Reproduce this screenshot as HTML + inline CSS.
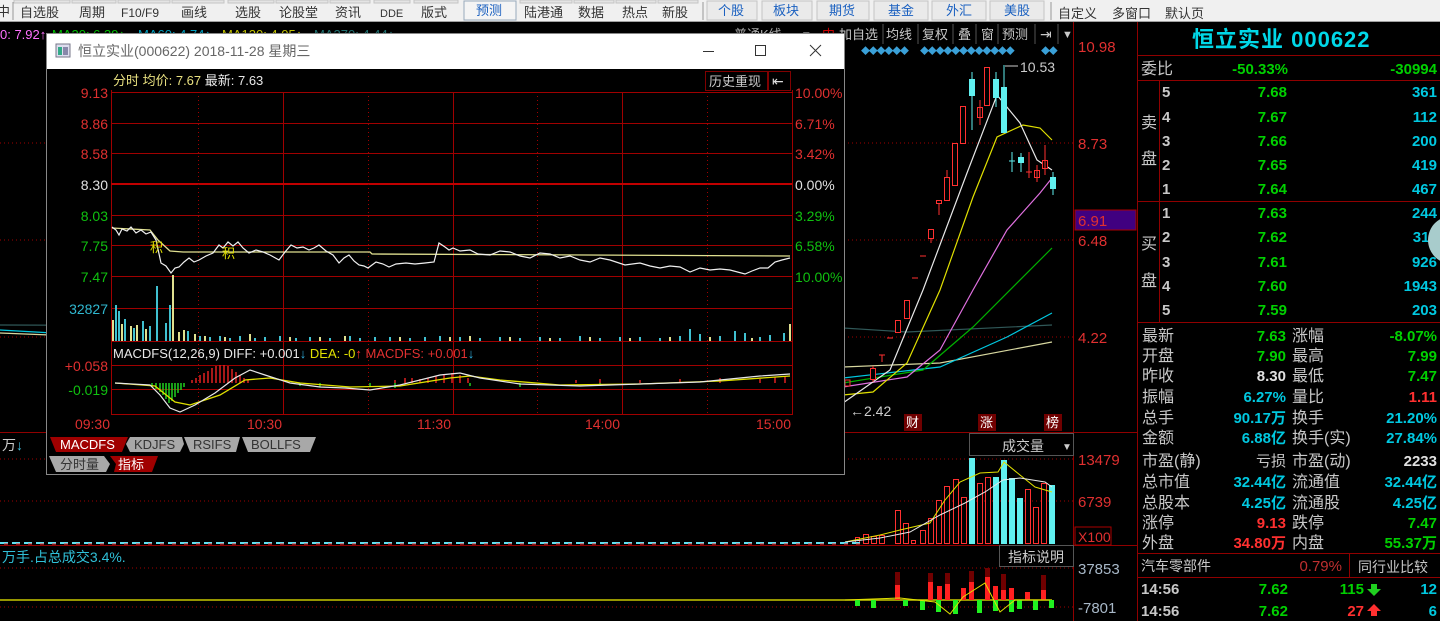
<!DOCTYPE html>
<html><head><meta charset="utf-8"><style>
html,body{margin:0;padding:0;background:#000;width:1440px;height:621px;overflow:hidden}
svg{display:block;font-family:"Liberation Sans","Noto Sans CJK SC",sans-serif}
</style></head><body>
<svg width="1440" height="621" viewBox="0 0 1440 621" xmlns="http://www.w3.org/2000/svg">
<rect width="1440" height="621" fill="#000"/>
<!-- toolbar -->
<rect x="0" y="0" width="1440" height="22" fill="#f0f0f0"/>
<line x1="0" y1="21.5" x2="1440" y2="21.5" stroke="#a0a0a0"/>
<g fill="#e4e4e4" stroke="#c4c4c4">
<rect x="14" y="0" width="56" height="3"/><rect x="72" y="0" width="44" height="3"/><rect x="118" y="0" width="52" height="3"/><rect x="172" y="0" width="52" height="3"/><rect x="228" y="0" width="46" height="3"/><rect x="276" y="0" width="52" height="3"/><rect x="330" y="0" width="40" height="3"/><rect x="374" y="0" width="36" height="3"/><rect x="414" y="0" width="44" height="3"/>
<rect x="464" y="1" width="52" height="19" fill="#f4f4f4" stroke="#9ab"/>
<rect x="520" y="0" width="52" height="3"/><rect x="574" y="0" width="40" height="3"/><rect x="616" y="0" width="40" height="3"/><rect x="658" y="0" width="40" height="3"/>
<rect x="707" y="1" width="50" height="19" fill="#eaeaea"/><rect x="762" y="1" width="50" height="19" fill="#eaeaea"/><rect x="817" y="1" width="52" height="19" fill="#eaeaea"/><rect x="874" y="1" width="54" height="19" fill="#eaeaea"/><rect x="932" y="1" width="54" height="19" fill="#eaeaea"/><rect x="990" y="1" width="54" height="19" fill="#eaeaea"/>
</g>
<line x1="1051" y1="2" x2="1051" y2="20" stroke="#999"/><line x1="13" y1="2" x2="13" y2="20" stroke="#999"/><line x1="703" y1="2" x2="703" y2="20" stroke="#999"/>
<g font-size="13" fill="#333">
<text x="-3" y="16">中</text><text x="20" y="17">自选股</text><text x="79" y="17">周期</text><text x="121" y="17" font-size="12">F10/F9</text><text x="181" y="17">画线</text><text x="235" y="17">选股</text><text x="279" y="17">论股堂</text><text x="335" y="17">资讯</text><text x="380" y="17" font-size="11">DDE</text><text x="421" y="17">版式</text>
<text x="476" y="15" fill="#1a60c0">预测</text><text x="524" y="17">陆港通</text><text x="578" y="17">数据</text><text x="622" y="17">热点</text><text x="662" y="17">新股</text>
<g fill="#1a60c0"><text x="718" y="15">个股</text><text x="773" y="15">板块</text><text x="829" y="15">期货</text><text x="888" y="15">基金</text><text x="946" y="15">外汇</text><text x="1004" y="15">美股</text></g>
<text x="1058" y="18">自定义</text><text x="1112" y="18">多窗口</text><text x="1165" y="18">默认页</text>
</g>
<!-- main header row -->
<g font-size="13">
<text x="0" y="39" fill="#ff70ff">0: 7.92↑</text><text x="52" y="39" fill="#00c000">MA20: 6.39↑</text><text x="138" y="39" fill="#00a0c0">MA60: 4.74↑</text><text x="222" y="39" fill="#c0c000">MA120: 4.05↑</text><text x="314" y="39" fill="#207070">MA270: 4.44↑</text>
<text x="734" y="39" fill="#aaa">普通K线</text><text x="803" y="39" fill="#aaa">▾</text><text x="822" y="39" fill="#c00">中</text>
<g fill="#c8c8c8"><text x="839" y="39">加自选</text><text x="886" y="39">均线</text><text x="922" y="39">复权</text><text x="958" y="39">叠</text><text x="981" y="39">窗</text><text x="1002" y="39">预测</text><text x="1040" y="39" font-size="14">⇥</text><text x="1062" y="38" font-size="11">▼</text></g>
</g>
<g stroke="#555"><line x1="883" y1="24" x2="883" y2="44"/><line x1="918" y1="24" x2="918" y2="44"/><line x1="953" y1="24" x2="953" y2="44"/><line x1="976" y1="24" x2="976" y2="44"/><line x1="998" y1="24" x2="998" y2="44"/><line x1="1035" y1="24" x2="1035" y2="44"/><line x1="1058" y1="24" x2="1058" y2="44"/></g>
<g fill="#3aa0d8" font-size="9"><text x="861" y="54" letter-spacing="-1.2">◆◆◆◆◆◆</text><text x="920" y="54" letter-spacing="-1.2">◆◆◆◆◆◆◆◆◆◆◆◆</text><text x="1041" y="54" letter-spacing="-1.2">◆◆</text></g>
<!-- main chart grid -->
<g stroke="#a00000" stroke-dasharray="1,3"><line x1="0" y1="143" x2="1073" y2="143"/><line x1="0" y1="240" x2="1073" y2="240"/><line x1="0" y1="337" x2="1073" y2="337"/><line x1="0" y1="459" x2="1073" y2="459"/><line x1="0" y1="501" x2="1073" y2="501"/><line x1="0" y1="568" x2="1073" y2="568"/><line x1="0" y1="607" x2="1073" y2="607"/></g>
<g stroke="#900000"><line x1="0" y1="432.5" x2="1137" y2="432.5"/><line x1="0" y1="545.5" x2="1137" y2="545.5"/><line x1="1073.5" y1="22" x2="1073.5" y2="621"/><line x1="1137.5" y1="22" x2="1137.5" y2="621"/><line x1="1137" y1="55.5" x2="1440" y2="55.5"/></g>
<!-- MA lines -->
<g fill="none" stroke-width="1.2">
<polyline stroke="#305858" points="0,325 843,328 907,332 1052,325"/>
<polyline stroke="#d8d8a0" points="0,333 843,367 940,363 1052,342"/>
<polyline stroke="#00c8e0" points="0,330 843,378 940,367 1007,337 1052,313"/>
<polyline stroke="#00b000" points="843,383 923,370 973,327 1052,248"/>
<polyline stroke="#e070e0" points="843,387 907,377 940,350 973,290 1007,230 1040,193 1052,178"/>
<polyline stroke="#e0e000" points="843,395 873,392 907,363 940,290 973,197 997,137 1023,125 1040,128 1052,140"/>
<polyline stroke="#e8e8e8" points="843,403 890,370 923,290 967,173 997,95 1020,123 1037,160 1052,170"/>
</g>
<!-- candles -->
<g stroke="#ff3030" fill="none">
<line x1="873" y1="366" x2="873" y2="382"/><rect x="870.5" y="368.5" width="5" height="11" fill="#000"/>
<line x1="879" y1="355" x2="885" y2="355"/><line x1="882" y1="355" x2="882" y2="362"/>
<line x1="887" y1="338" x2="893" y2="338"/>
<rect x="895.5" y="320.5" width="5" height="12" fill="#000"/>
<rect x="904.5" y="300.5" width="5" height="18" fill="#000"/>
<line x1="912" y1="278" x2="918" y2="278"/><line x1="920" y1="256" x2="926" y2="256"/>
<rect x="928.5" y="229.5" width="5" height="9" fill="#000"/><line x1="931" y1="238" x2="931" y2="243"/>
<rect x="936.5" y="200.5" width="5" height="3" fill="#000"/><line x1="939" y1="203" x2="939" y2="215"/>
<rect x="944.5" y="177.5" width="5" height="23" fill="#000"/><line x1="947" y1="170" x2="947" y2="177"/>
<rect x="952.5" y="143.5" width="5" height="42" fill="#000"/>
<rect x="960.5" y="106.5" width="5" height="37" fill="#000"/>
<rect x="977.5" y="107.5" width="5" height="10" fill="#000"/><line x1="980" y1="100" x2="980" y2="125"/>
<rect x="984.5" y="67.5" width="5" height="38" fill="#000"/>
<line x1="1029" y1="152" x2="1029" y2="178"/><line x1="1026" y1="172" x2="1032" y2="172"/>
<rect x="1034.5" y="170.5" width="5" height="7" fill="#000"/><line x1="1037" y1="165" x2="1037" y2="182"/>
<rect x="1042.5" y="160.5" width="5" height="8" fill="#000"/><line x1="1045" y1="145" x2="1045" y2="175"/>
</g>
<g fill="#60f0f0" stroke="#60f0f0">
<line x1="972" y1="72" x2="972" y2="130"/><rect x="969.5" y="79.5" width="5" height="16"/>
<line x1="996" y1="72" x2="996" y2="107"/><rect x="993.5" y="79.5" width="5" height="18"/>
<line x1="1004" y1="65" x2="1004" y2="132"/><rect x="1001.5" y="87.5" width="5" height="45"/>
<line x1="1012" y1="152" x2="1012" y2="172"/><line x1="1009" y1="161" x2="1015" y2="161"/>
<line x1="1021" y1="153" x2="1021" y2="172"/><rect x="1018.5" y="157.5" width="5" height="5"/>
<line x1="1053" y1="172" x2="1053" y2="195"/><rect x="1050.5" y="177.5" width="5" height="11"/>
</g>
<line x1="1005" y1="66" x2="1018" y2="66" stroke="#ccc"/><text x="1020" y="72" font-size="14" fill="#ccc">10.53</text>
<text x="850" y="416" font-size="14" fill="#ccc">←2.42</text>
<rect x="845" y="380" width="5" height="6" fill="none" stroke="#f33"/>
<g font-size="13" fill="#fff"><rect x="904" y="414" width="18" height="17" fill="#700000"/><text x="906" y="427">财</text><rect x="978" y="414" width="18" height="17" fill="#700000"/><text x="980" y="427">涨</text><rect x="1044" y="414" width="18" height="17" fill="#700000"/><text x="1046" y="427">榜</text></g>
<!-- axis labels -->
<g font-size="15" fill="#e03030"><text x="1078" y="52">10.98</text><text x="1078" y="149">8.73</text><rect x="1075" y="210" width="61" height="20" fill="#400080" stroke="#a00"/><text x="1078" y="226">6.91</text><text x="1078" y="246">6.48</text><text x="1078" y="343">4.22</text>
<text x="1078" y="465">13479</text><text x="1078" y="507">6739</text><rect x="1075" y="527" width="36" height="18" fill="none" stroke="#a00"/><text x="1078" y="542" font-size="14">X100</text></g>
<g font-size="15" fill="#a8b8c8"><text x="1078" y="574">37853</text><text x="1078" y="613">-7801</text></g>
<!-- volume box -->
<rect x="969.5" y="433.5" width="104" height="22" fill="#000" stroke="#555"/><text x="1002" y="451" font-size="14" fill="#ccc">成交量</text><text x="1062" y="450" font-size="10" fill="#ccc">▼</text>
<rect x="999.5" y="545.5" width="74" height="21" fill="#000" stroke="#555"/><text x="1008" y="562" font-size="14" fill="#ccc">指标说明</text>
<!-- main volume bars -->
<g fill="#000" stroke="#ff3030">
<rect x="855.5" y="537.5" width="4" height="6"/><rect x="863.5" y="534.5" width="5" height="9"/><rect x="871.5" y="536.5" width="5" height="7"/><rect x="879.5" y="535.5" width="5" height="8"/><rect x="895.5" y="510.5" width="5" height="33"/><rect x="903.5" y="523.5" width="5" height="20"/><rect x="911.5" y="540.5" width="4" height="3"/><rect x="920.5" y="530.5" width="5" height="13"/><rect x="928.5" y="518.5" width="5" height="25"/><rect x="936.5" y="500.5" width="5" height="43"/><rect x="944.5" y="486.5" width="5" height="57"/><rect x="953.5" y="479.5" width="5" height="64"/><rect x="961.5" y="497.5" width="5" height="46"/><rect x="977.5" y="483.5" width="5" height="60"/><rect x="985.5" y="477.5" width="5" height="66"/><rect x="1025.5" y="489.5" width="5" height="54"/><rect x="1033.5" y="507.5" width="5" height="36"/><rect x="1041.5" y="483.5" width="5" height="60"/>
</g>
<g fill="#60f0f0"><rect x="969" y="458" width="6" height="86"/><rect x="993" y="477" width="6" height="67"/><rect x="1001" y="460" width="6" height="84"/><rect x="1009" y="478" width="6" height="66"/><rect x="1017" y="498" width="6" height="46"/><rect x="1049" y="485" width="6" height="59"/></g>
<polyline fill="none" stroke="#e0e000" points="845,542 880,535 900,530 930,523 945,500 960,482 980,473 998,472 1004,462 1020,475 1035,487 1052,492"/>
<polyline fill="none" stroke="#e8e8e8" points="845,542 880,538 910,532 940,515 965,503 985,492 1003,480 1020,478 1045,482 1052,487"/>
<line x1="0" y1="543" x2="860" y2="543" stroke="#60e0f0" stroke-width="2" stroke-dasharray="8,4"/>
<line x1="4" y1="544" x2="860" y2="544" stroke="#ff3030" stroke-width="1" stroke-dasharray="4,8"/>
<!-- bottom macd -->
<line x1="0" y1="600" x2="1052" y2="600" stroke="#c8c800" stroke-width="1.5"/>
<g fill="#ff2020"><rect x="895" y="585" width="5" height="15"/><rect x="928" y="582" width="5" height="18"/><rect x="937" y="586" width="5" height="14"/><rect x="945" y="584" width="5" height="16"/><rect x="961" y="588" width="5" height="12"/><rect x="969" y="582" width="5" height="18"/><rect x="985" y="577" width="5" height="23"/><rect x="993" y="586" width="5" height="14"/><rect x="1001" y="590" width="5" height="10"/><rect x="1009" y="588" width="5" height="12"/><rect x="1025" y="592" width="5" height="8"/><rect x="1041" y="590" width="5" height="10"/></g>
<g fill="#700000"><rect x="895" y="572" width="5" height="13"/><rect x="928" y="573" width="5" height="9"/><rect x="945" y="573" width="5" height="11"/><rect x="969" y="571" width="5" height="11"/><rect x="985" y="568" width="5" height="9"/><rect x="1001" y="574" width="5" height="16"/><rect x="1041" y="575" width="5" height="15"/></g>
<g fill="#20f020"><rect x="855" y="600" width="5" height="6"/><rect x="871" y="600" width="5" height="8"/><rect x="903" y="600" width="5" height="6"/><rect x="920" y="600" width="5" height="10"/><rect x="936" y="600" width="5" height="12"/><rect x="953" y="600" width="5" height="14"/><rect x="977" y="600" width="5" height="13"/><rect x="993" y="600" width="5" height="11"/><rect x="1009" y="600" width="5" height="12"/><rect x="1017" y="600" width="5" height="9"/><rect x="1033" y="600" width="5" height="10"/><rect x="1049" y="600" width="5" height="8"/></g>
<polyline fill="none" stroke="#e0e000" points="845,600 900,598 935,602 950,614 963,597 985,583 1000,612 1015,600 1050,600"/>
<text x="2" y="450" font-size="14" fill="#ccc">万<tspan fill="#40c0e0">↓</tspan></text>
<text x="2" y="562" font-size="14" fill="#30c0d8">万手.占总成交3.4%.</text>
<!-- right panel -->
<text x="1192" y="47" font-size="22" font-weight="bold" fill="#00d8e8" letter-spacing="1">恒立实业 000622</text>
<g stroke="#900000"><line x1="1137" y1="80.5" x2="1440" y2="80.5"/><line x1="1137" y1="201.5" x2="1440" y2="201.5"/><line x1="1137" y1="322.5" x2="1440" y2="322.5"/><line x1="1159.5" y1="80" x2="1159.5" y2="322"/><line x1="1137" y1="553.5" x2="1440" y2="553.5"/><line x1="1137" y1="577.5" x2="1440" y2="577.5"/><line x1="1349.5" y1="554" x2="1349.5" y2="577"/></g>
<g font-size="16" fill="#c8c8c8"><text x="1141" y="74">委比</text><text x="1141" y="128">卖</text><text x="1141" y="164">盘</text><text x="1141" y="249">买</text><text x="1141" y="286">盘</text></g>
<g font-size="15" fill="#c8c8c8" font-weight="bold"><text x="1162" y="97">5</text><text x="1162" y="122">4</text><text x="1162" y="146">3</text><text x="1162" y="170">2</text><text x="1162" y="194">1</text><text x="1162" y="218">1</text><text x="1162" y="242">2</text><text x="1162" y="267">3</text><text x="1162" y="291">4</text><text x="1162" y="315">5</text></g>
<g font-size="15" font-weight="bold" fill="#00d000" text-anchor="end"><text x="1288" y="74">-50.33%</text><text x="1437" y="74">-30994</text>
<text x="1287" y="97">7.68</text><text x="1287" y="122">7.67</text><text x="1287" y="146">7.66</text><text x="1287" y="170">7.65</text><text x="1287" y="194">7.64</text><text x="1287" y="218">7.63</text><text x="1287" y="242">7.62</text><text x="1287" y="267">7.61</text><text x="1287" y="291">7.60</text><text x="1287" y="315">7.59</text></g>
<g font-size="15" font-weight="bold" fill="#00c8e0" text-anchor="end"><text x="1437" y="97">361</text><text x="1437" y="122">112</text><text x="1437" y="146">200</text><text x="1437" y="170">419</text><text x="1437" y="194">467</text><text x="1437" y="218">244</text><text x="1437" y="242">311</text><text x="1437" y="267">926</text><text x="1437" y="291">1943</text><text x="1437" y="315">203</text></g>
<circle cx="1452" cy="240" r="24" fill="#a8cccc"/>
<g font-size="16" fill="#c8c8c8"><text x="1142" y="341">最新</text><text x="1142" y="361">开盘</text><text x="1142" y="381">昨收</text><text x="1142" y="402">振幅</text><text x="1142" y="423">总手</text><text x="1142" y="443">金额</text><text x="1142" y="466">市盈(静)</text><text x="1142" y="487">总市值</text><text x="1142" y="508">总股本</text><text x="1142" y="528">涨停</text><text x="1142" y="548">外盘</text>
<text x="1292" y="341">涨幅</text><text x="1292" y="361">最高</text><text x="1292" y="381">最低</text><text x="1292" y="402">量比</text><text x="1292" y="423">换手</text><text x="1292" y="443">换手(实)</text><text x="1292" y="466">市盈(动)</text><text x="1292" y="487">流通值</text><text x="1292" y="508">流通股</text><text x="1292" y="528">跌停</text><text x="1292" y="548">内盘</text></g>
<g font-size="15" font-weight="bold" text-anchor="end">
<text x="1286" y="341" fill="#00d000">7.63</text><text x="1286" y="361" fill="#00d000">7.90</text><text x="1286" y="381" fill="#e0e0e0">8.30</text><text x="1286" y="402" fill="#00c8e0">6.27%</text><text x="1286" y="423" fill="#00c8e0">90.17万</text><text x="1286" y="443" fill="#00c8e0">6.88亿</text><text x="1286" y="466" fill="#c8c8c8" font-weight="normal">亏损</text><text x="1286" y="487" fill="#00c8e0">32.44亿</text><text x="1286" y="508" fill="#00c8e0">4.25亿</text><text x="1286" y="528" fill="#ff3030">9.13</text><text x="1286" y="548" fill="#ff3030">34.80万</text>
<text x="1437" y="341" fill="#00d000">-8.07%</text><text x="1437" y="361" fill="#00d000">7.99</text><text x="1437" y="381" fill="#00d000">7.47</text><text x="1437" y="402" fill="#ff3030">1.11</text><text x="1437" y="423" fill="#00c8e0">21.20%</text><text x="1437" y="443" fill="#00c8e0">27.84%</text><text x="1437" y="466" fill="#e0e0e0">2233</text><text x="1437" y="487" fill="#00c8e0">32.44亿</text><text x="1437" y="508" fill="#00c8e0">4.25亿</text><text x="1437" y="528" fill="#00d000">7.47</text><text x="1437" y="548" fill="#00d000">55.37万</text>
<text x="1342" y="571" fill="#c03030" font-weight="normal">0.79%</text>
<text x="1288" y="594" fill="#00d000">7.62</text><text x="1288" y="616" fill="#00d000">7.62</text><text x="1364" y="594" fill="#00d000">115</text><text x="1364" y="616" fill="#ff3030">27</text><text x="1437" y="594" fill="#00c8e0">12</text><text x="1437" y="616" fill="#00c8e0">6</text></g>
<text x="1141" y="571" font-size="14" fill="#c8c8c8">汽车零部件</text><text x="1358" y="572" font-size="14" fill="#c8c8c8">同行业比较</text>
<g font-size="15" font-weight="bold" fill="#c8c8c8"><text x="1141" y="594">14:56</text><text x="1141" y="616">14:56</text></g>
<path d="M1371 584h6v5h4l-7 7-7-7h4z" fill="#20d020"/><path d="M1374 604l7 7h-4v5h-6v-5h-4z" fill="#ff3030"/>

<!-- POPUP -->
<rect x="46.5" y="33.5" width="798" height="441" fill="#000" stroke="#888"/>
<rect x="47" y="34" width="797" height="35" fill="#fff"/>
<rect x="56" y="44" width="14" height="13" fill="#dde" stroke="#778"/><rect x="58" y="47" width="4" height="8" fill="#3a8"/><rect x="63" y="47" width="5" height="8" fill="#88a"/>
<text x="78" y="56" font-size="14" fill="#666">恒立实业(000622) 2018-11-28 星期三</text>
<line x1="703" y1="51.5" x2="714" y2="51.5" stroke="#333"/>
<rect x="755.5" y="45.5" width="10" height="10" fill="none" stroke="#333"/>
<path d="M810 45l11 11M821 45l-11 11" stroke="#333"/>
<!-- header -->
<text x="113" y="85" font-size="13" fill="#e8e080">分时 均价: 7.67 <tspan fill="#e8e8e8">最新: 7.63</tspan></text>
<rect x="705.5" y="71.5" width="62" height="19" fill="#000" stroke="#800000"/><text x="709" y="86" font-size="13" fill="#ccc">历史重现</text>
<rect x="768.5" y="71.5" width="22" height="19" fill="#000" stroke="#800000"/><text x="772" y="86" font-size="14" fill="#ddd">⇤</text>
<!-- grid -->
<g stroke="#a00000">
<line x1="111" y1="92.5" x2="792" y2="92.5"/><line x1="111" y1="123.5" x2="792" y2="123.5"/><line x1="111" y1="153.5" x2="792" y2="153.5"/><line x1="111" y1="215.5" x2="792" y2="215.5"/><line x1="111" y1="245.5" x2="792" y2="245.5"/><line x1="111" y1="276.5" x2="792" y2="276.5"/><line x1="111" y1="308.5" x2="792" y2="308.5"/><line x1="111" y1="341.5" x2="792" y2="341.5"/>
<line x1="111" y1="365.5" x2="792" y2="365.5"/><line x1="111" y1="389.5" x2="792" y2="389.5"/><line x1="111" y1="414.5" x2="792" y2="414.5"/>
<line x1="111.5" y1="90" x2="111.5" y2="415"/><line x1="792.5" y1="90" x2="792.5" y2="415"/>
<line x1="283.5" y1="92" x2="283.5" y2="415"/><line x1="453.5" y1="92" x2="453.5" y2="415"/><line x1="622.5" y1="92" x2="622.5" y2="415"/>
</g>
<line x1="111" y1="184" x2="792" y2="184" stroke="#c00000" stroke-width="2"/>
<g stroke="#a00000" stroke-dasharray="1,3"><line x1="198.5" y1="92" x2="198.5" y2="415"/><line x1="368.5" y1="92" x2="368.5" y2="415"/><line x1="537.5" y1="92" x2="537.5" y2="415"/><line x1="707.5" y1="92" x2="707.5" y2="415"/></g>
<!-- axis labels -->
<g font-size="14" text-anchor="end"><text x="108" y="98" fill="#e03030">9.13</text><text x="108" y="129" fill="#e03030">8.86</text><text x="108" y="159" fill="#e03030">8.58</text><text x="108" y="190" fill="#e0e0e0">8.30</text><text x="108" y="221" fill="#10c010">8.03</text><text x="108" y="251" fill="#10c010">7.75</text><text x="108" y="282" fill="#10c010">7.47</text><text x="108" y="314" fill="#30b8d0">32827</text><text x="108" y="371" fill="#e03030">+0.058</text><text x="108" y="395" fill="#10c010">-0.019</text></g>
<g font-size="14"><text x="795" y="98" fill="#e03030">10.00%</text><text x="795" y="129" fill="#e03030">6.71%</text><text x="795" y="159" fill="#e03030">3.42%</text><text x="795" y="190" fill="#e0e0e0">0.00%</text><text x="795" y="221" fill="#10c010">3.29%</text><text x="795" y="251" fill="#10c010">6.58%</text><text x="795" y="282" fill="#10c010">10.00%</text></g>
<g font-size="14" fill="#e03030" text-anchor="end"><text x="110" y="429">09:30</text><text x="282" y="429">10:30</text><text x="451" y="429">11:30</text><text x="620" y="429">14:00</text><text x="791" y="429">15:00</text></g>
<!-- price lines -->
<polyline fill="none" stroke="#e0e090" stroke-width="1.3" points="112,228 150,230 158,240 170,251 183,252 370,252 372,254 790,256"/>
<polyline fill="none" stroke="#f0f0f0" stroke-width="1.2" points="112,227 116,230 119,235 122,229 127,231 131,227 136,233 141,230 146,234 151,232 156,240 161,263 166,266 171,273 175,268 179,267 184,262 189,258 194,262 199,260 206,256 213,253 219,245 223,248 228,242 233,246 238,242 243,248 249,253 256,250 263,252 270,255 279,260 285,252 291,245 297,248 303,247 309,250 314,248 319,245 326,251 333,255 339,263 344,258 349,255 354,261 359,265 364,266 368,268 372,265 376,262 383,264 389,267 396,264 406,263 415,264 425,263 434,262 439,243 445,247 449,250 453,248 460,251 470,250 478,254 490,255 500,251 510,252 520,256 530,258 540,253 550,254 560,258 570,256 580,260 590,262 600,258 610,260 625,265 640,263 650,266 660,268 670,266 680,267 690,272 700,268 710,270 720,269 730,270 745,274 752,271 760,268 768,268 775,262 782,260 790,258"/>
<g font-size="13" fill="#e0e000"><text x="150" y="252">积</text><text x="222" y="258">积</text></g>
<!-- popup volume -->
<path fill="none" stroke-width="2" stroke="#40c0d0" d="M116 341V305M119 341V311M125 341V319M134 341V328M143 341V321M150 341V326M157 341V286M166 341V323M170 341V305M188 341V331M200 341V336M210 341V337M220 341V336M230 341V338M240 341V336M255 341V338M265 341V337M280 341V336M296 341V338M310 341V337M330 341V338M350 341V336M360 341V338M375 341V337M390 341V337M410 341V338M425 341V337M440 341V336M460 341V337M480 341V338M500 341V337M520 341V338M540 341V337M560 341V338M580 341V336M600 341V338M620 341V337M640 341V337M660 341V338M680 341V336M690 341V329M700 341V334M720 341V336M735 341V331M745 341V333M760 341V337M770 341V335M784 341V333"/>
<path fill="none" stroke-width="2" stroke="#e0e090" d="M113 341V320M122 341V324M131 341V326M137 341V325M146 341V329M173 341V275M179 341V332M184 341V330M195 341V334M205 341V336M225 341V337M250 341V334M290 341V337M320 341V337M345 341V336M400 341V337M450 341V337M470 341V336M510 341V337M550 341V338M590 341V337M630 341V338M670 341V337M710 341V337M752 341V338M790 341V324"/>
<!-- macd popup -->
<text x="113" y="358" font-size="13" fill="#e8e8e8">MACDFS(12,26,9) DIFF: +0.001<tspan fill="#30b0e0">↓</tspan> <tspan fill="#e0e000">DEA: -0</tspan><tspan fill="#ff3030">↑</tspan> <tspan fill="#e03030">MACDFS: +0.001</tspan><tspan fill="#30b0e0">↓</tspan></text>
<path fill="none" stroke-width="1.5" stroke="#20d020" d="M152 383v4M156 383v6M160 383v9M163 383v12M166 383v16M169 383v20M172 383v18M175 383v14M178 383v10M181 383v7M184 383v4M300 383v3M320 383v4M370 383v3M395 383v5M470 383v3M520 383v4M600 383v3"/>
<path fill="none" stroke-width="1.5" stroke="#e02020" d="M192 383v-3M196 383v-5M200 383v-8M204 383v-10M208 383v-12M212 383v-15M216 383v-17M220 383v-18M224 383v-18M228 383v-17M232 383v-14M236 383v-11M240 383v-8M244 383v-5M248 383v-3M395 383v-3M405 383v-5M412 383v-5M420 383v-4M428 383v-5M436 383v-7M444 383v-9M452 383v-10M460 383v-8M468 383v-5M576 383v-3M600 383v-4M640 383v-3M680 383v-4M720 383v-5M760 383v-4M775 383v-6M785 383v-7"/>
<polyline fill="none" stroke="#e0e000" stroke-width="1.3" points="115,383 155,386 175,402 190,405 220,395 245,380 270,378 300,383 350,387 400,386 450,378 470,376 500,380 560,385 640,384 720,381 790,376"/>
<polyline fill="none" stroke="#e8e8e8" stroke-width="1.2" points="115,383 150,385 160,395 170,408 180,412 195,405 215,393 235,378 250,370 265,375 290,383 320,387 345,388 370,390 400,385 440,375 460,373 480,378 520,384 580,386 640,384 700,382 740,378 760,376 790,374"/>
<!-- tabs -->
<g font-size="13">
<polygon points="50,437 128,437 122,452 56,452" fill="#a00000"/><text x="60" y="449" fill="#fff">MACDFS</text>
<polygon points="130,437 182,437 184,444 180,452 130,452 126,444" fill="#a8a8a8"/><text x="134" y="449" fill="#333">KDJFS</text>
<polygon points="184,437 240,437 236,452 190,452" fill="#a8a8a8"/><text x="193" y="449" fill="#333">RSIFS</text>
<polygon points="242,437 316,437 310,452 248,452" fill="#a8a8a8"/><text x="251" y="449" fill="#333">BOLLFS</text>
<polygon points="49,456 104,456 110,464 106,472 56,472" fill="#a8a8a8"/><text x="60" y="469" fill="#333">分时量</text>
<polygon points="110,456 158,456 152,472 114,472 116,464" fill="#a00000"/><text x="118" y="469" fill="#fff">指标</text>
</g>
</svg>
</body></html>
